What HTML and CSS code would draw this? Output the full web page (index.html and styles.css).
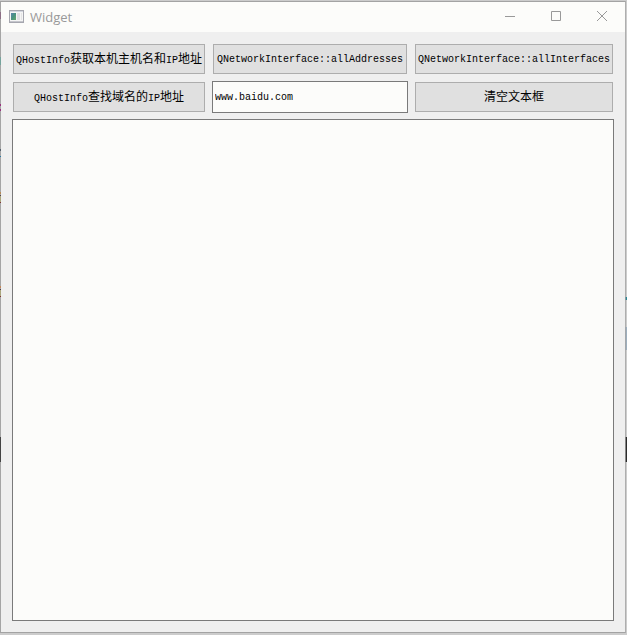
FILE: index.html
```html
<!DOCTYPE html>
<html lang="zh-CN">
<head>
<meta charset="utf-8">
<meta name="viewport" content="width=device-width, initial-scale=1">
<title>Widget</title>
<link rel="stylesheet" href="styles.css">
</head>
<body>
<main class="window">
  <header class="titlebar">
    <svg class="app-icon" width="16" height="16" viewBox="0 0 16 16" aria-hidden="true" shape-rendering="crispEdges">
      <defs>
        <linearGradient id="pane" x1="0" y1="0" x2="1" y2="1">
          <stop offset="0" stop-color="#5b83ad"/>
          <stop offset="0.5" stop-color="#49937f"/>
          <stop offset="1" stop-color="#68a86b"/>
        </linearGradient>
      </defs>
      <rect x="0" y="1" width="15" height="13" fill="#a6a7af"/>
      <rect x="1" y="2" width="13" height="1" fill="#d3d6df"/>
      <rect x="1" y="3" width="13" height="9" fill="#f5f5f5"/>
      <rect x="2" y="4" width="5" height="7" fill="url(#pane)"/>
      <rect x="8" y="4" width="3" height="7" fill="#dfdfe2"/>
      <rect x="12" y="4" width="1" height="7" fill="#e4e4e4"/>
      <rect x="1" y="12" width="13" height="1" fill="#c5c6cc"/>
    </svg>
    <h1 class="title">Widget</h1>
    <div class="window-controls">
      <button class="control" type="button" aria-label="Minimize"><svg width="12" height="12" viewBox="0 0 12 12"><path d="M1 6.5H11"/></svg></button>
      <button class="control" type="button" aria-label="Maximize"><svg width="12" height="12" viewBox="0 0 12 12"><path d="M1.5 1.5H10.5V10.5H1.5Z"/></svg></button>
      <button class="control" type="button" aria-label="Close"><svg width="12" height="12" viewBox="0 0 12 12"><path d="M1 1L11 11M11 1L1 11"/></svg></button>
    </div>
  </header>
  <div class="content">
    <div class="actions">
      <button class="push" type="button">QHostInfo<span class="han">获取本机主机名和</span>IP<span class="han">地址</span></button>
      <button class="push" type="button">QNetworkInterface::allAddresses</button>
      <button class="push" type="button">QNetworkInterface::allInterfaces</button>
      <button class="push" type="button">QHostInfo<span class="han">查找域名的</span>IP<span class="han">地址</span></button>
      <input class="domain" type="text" value="www.baidu.com" aria-label="域名">
      <button class="push" type="button"><span class="han">清空文本框</span></button>
    </div>
    <textarea class="output" aria-label="输出"></textarea>
  </div>
</main>
</body>
</html>
```
FILE: styles.css
```css
* {
  box-sizing: border-box;
}

/* Slivers of the desktop show at both edges of the window. */
body {
  margin: 0;
  height: 100vh;
  display: flex;
  padding: 1px 1px 2px 0;
  background-color: #cccccc;
  background-image: linear-gradient(#0000 297px, #2c8795 297px 300px, #0000 300px 327px, #9daebd 327px 350px, #0000 350px 437px, #2b2b2b 437px 462px, #0000 462px);
  background-position: right top;
  background-size: 2px 100%;
  background-repeat: no-repeat;
}

.window {
  flex: 1;
  min-width: 0;
  display: flex;
  flex-direction: column;
  border: 1px solid #a3a3a3;
  border-left: 0;
  border-right-color: #a3a3a3c0;
  padding-left: 1px;
  background-color: #efefef;
  background-clip: padding-box;
  background-image: linear-gradient(#a5a5a5 10px, #8d6f85 10px 17px, #a5a5a5 17px 55px, #75a39c 55px 63px, #a5a5a5 63px 102px, #98307d 102px 104px, #a5a5a5 104px 107px, #98307d 107px 109px, #a5a5a5 109px 147px, #55606c 147px 149px, #a5a5a5 149px 154px, #2877a3 154px 155px, #a5a5a5 155px 190px, #b48a59 190px 192px, #a5a5a5 192px 193px, #554144 193px 194px, #aaa67d 194px 200px, #7e3434 200px 201px, #a5a5a5 201px 284px, #c2875b 284px 286px, #a5a5a5 286px 287px, #554144 287px 288px, #aaa67d 288px 294px, #7e3434 294px 295px, #a5a5a5 295px 435px, #444444 435px 460px, #a5a5a5 460px);
  background-size: 1px 100%;
  background-repeat: no-repeat;
}

.titlebar {
  height: 30px;
  flex: none;
  display: flex;
  align-items: center;
  padding-left: 8px;
  background: #fcfcfa;
}

.app-icon {
  margin-right: 5px;
}

.title {
  margin: 0;
  font: 400 13px/16px "Open Sans", "Noto Sans", sans-serif;
  color: #999999;
}

.window-controls {
  display: flex;
  align-self: stretch;
  margin-left: auto;
}

.control {
  width: 46px;
  padding: 0 0 2px;
  border: 0;
  background: none;
  display: flex;
  align-items: center;
  justify-content: center;
}

.control path {
  fill: none;
  stroke: #999999;
}

.content {
  flex: 1;
  min-height: 0;
  display: flex;
  flex-direction: column;
  gap: 6px;
  padding: 11px;
}

.actions {
  display: grid;
  grid-template-columns: 194fr 196fr 200fr;
  grid-auto-rows: 32px;
  gap: 6px;
}

.push,
.domain,
.output {
  font: 10px/16px "Liberation Mono", "Noto Sans CJK SC", monospace;
  color: #000000;
  border-radius: 0;
}

.push {
  min-width: 0;
  margin: 1px;
  padding: 2px 0 0;
  border: 1px solid #adadad;
  background: #e0e0e0;
  white-space: nowrap;
}

.han {
  font-size: 12px;
}

.domain,
.output {
  width: 100%;
  min-width: 0;
  margin: 0;
  padding: 2px 2px 0;
  border: 1px solid #7a7a7a;
  background: #fcfcfa;
}

.output {
  flex: 1;
  display: block;
  resize: none;
}
```
